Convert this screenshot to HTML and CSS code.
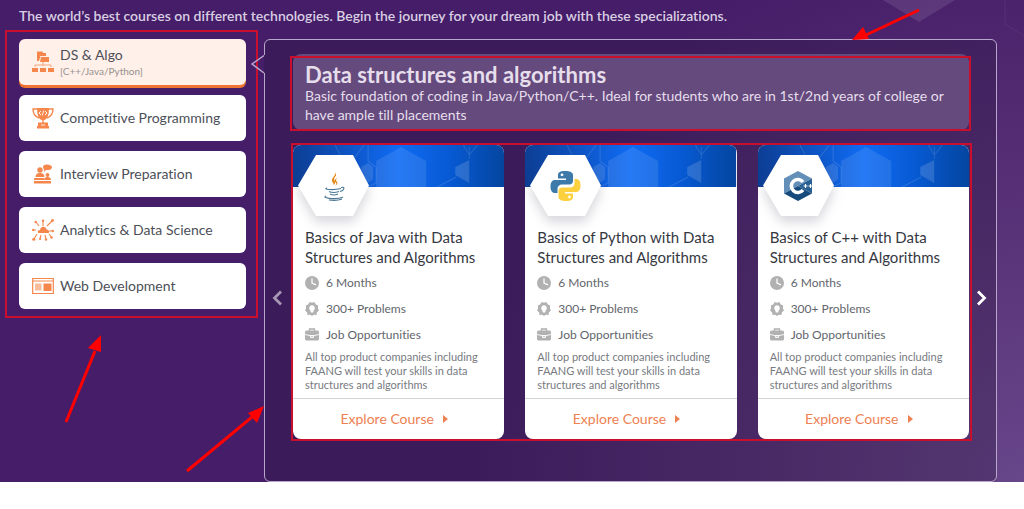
FILE: index.html
```html
<!DOCTYPE html>
<html lang="en">
<head>
<meta charset="utf-8">
<meta name="viewport" content="width=device-width, initial-scale=1">
<title>Courses</title>
<link rel="stylesheet" href="styles.css">
</head>
<body>
<svg class="sprite" width="0" height="0" aria-hidden="true">
  <defs>
    <linearGradient id="blue" x1="0" x2="1"><stop offset="0" stop-color="#0d3e94"/><stop offset=".5" stop-color="#0f6bf4"/><stop offset=".75" stop-color="#0759d2"/><stop offset="1" stop-color="#04459f"/></linearGradient>
    <symbol id="pattern" viewBox="0 0 211 42" preserveAspectRatio="none">
      <rect width="211" height="42" fill="url(#blue)"/>
      <path d="M83 42V16L108 2l25 14v26z" fill="#fff" opacity=".1"/>
      <path d="M162 22l14-7v23l-14-8z" fill="#fff" opacity=".15"/>
      <path d="M68 22l7-4 5 4v12l-5 4-7-4z" fill="#fff" opacity=".12"/>
      <path d="M75 0v16l8 6v16l-9 4M42 0l6 12h14l9-12M144 42l19-10M176 14V2M170 0l6 10 8-10" fill="none" stroke="#fff" opacity=".13"/>
    </symbol>
    <symbol id="clock" viewBox="0 0 14 14"><circle cx="7" cy="7" r="7" fill="#b1b1b1"/><path d="M7 2.5V7l4 1.8" fill="none" stroke="#fff" stroke-width="1.3"/></symbol>
    <symbol id="gear" viewBox="0 0 14 14"><path d="M4.600 0l2.400.8L9.400 0l1.400 2.400L13.200 3.600 12.900 6.200 14 8.400l-2 1.900-.6 2.600-2.700-.1L7 14l-1.700-1.200-2.700.1L2 10.300 0 8.400l1.100-2.200L.8 3.600l2.400-1.200z" fill="#b1b1b1"/><path d="M7 3.300a2.900 2.900 0 0 0-1.700 5.200L5.800 10.500h2.400l.5-2A2.900 2.900 0 0 0 7 3.300z" fill="#fff"/></symbol>
    <symbol id="bag" viewBox="0 0 14 14"><path d="M4.500 3V1h5v2" fill="none" stroke="#b1b1b1" stroke-width="1.400"/><rect y="2.500" width="14" height="10" rx="1.500" fill="#b1b1b1"/><path d="M0 6.500q7 3 14 0M5.500 7.500h3v2h-3z" fill="none" stroke="#fff" stroke-width=".9"/></symbol>
  </defs>
</svg>

<main class="courses">
  <p class="intro">The world’s best courses on different technologies. Begin the journey for your dream job with these specializations.</p>
  <svg class="decor" viewBox="0 0 150 40" aria-hidden="true">
    <path d="M9 0h72L45 22z" fill="#fff" opacity=".1"/>
    <path d="M131 0v24l19 12" fill="none" stroke="#fff" opacity=".06" stroke-width="1"/>
  </svg>

  <div class="layout">
    <nav class="tabs" aria-label="Specializations">
      <button class="tab tab-active" type="button">
        <svg class="tab-icon" viewBox="0 0 22 22" aria-hidden="true"><path d="M5 2V.5h5L11.500 2H14v3H8.500L7 10H5zM9 6h8v5H8z" fill="#f5874c"/><path d="M3 16v-2h16v2M11 11v4" fill="none" stroke="#f5a67c"/><path d="M0 17h6v4H0zM8 17h6v4H8zM16 17h6v4h-6z" fill="#f5874c"/></svg>
        <span class="tab-label">DS &amp; Algo<small class="tab-note">[C++/Java/Python]</small></span>
      </button>
      <button class="tab" type="button">
        <svg class="tab-icon" viewBox="0 0 22 22" aria-hidden="true"><path d="M5 1h12q0 10-4.500 12h-3Q5 11 5 1z" fill="#f5874c"/><path d="M5 2H1q0 7 6 9M17 2h4q0 7-6 9M11 12v4" fill="none" stroke="#f5874c" stroke-width="1.400"/><path d="M6 15.500h10V19h1v2.500H5V19h1z" fill="#f5874c"/><path d="M9 4L7 6l2 2M13 4l2 2-2 2M11.700 3.500l-1.400 5M9 18h4" fill="none" stroke="#fff" stroke-width=".9"/></svg>
        <span class="tab-label">Competitive Programming</span>
      </button>
      <button class="tab" type="button">
        <svg class="tab-icon" viewBox="0 0 22 22" aria-hidden="true"><circle cx="8" cy="7" r="2.700" fill="#f5874c"/><circle cx="15.500" cy="12" r="1.900" fill="#f5874c"/><path d="M3.500 14q0-4 4.500-4t4.500 4zM12 17q0-3 3.500-3t3.500 3zM2 15h10v2H2zM2 18h17v2.500H2zM11 4q0-2.500 4-2.500t5 2.500q0 3-4 3h-2l-2 2 .3-2.500Q11 5.500 11 4z" fill="#f5874c"/></svg>
        <span class="tab-label">Interview Preparation</span>
      </button>
      <button class="tab" type="button">
        <svg class="tab-icon" viewBox="0 0 22 22" aria-hidden="true"><path d="M6 14q-1-3 2-3 1-4 4.500-3 2 .5 2 2.500 3 0 2.500 3.500z" fill="#f5874c"/><path d="M11 7V2M15 7l5-5M7 7L4 3M4 11H1M17 12h4M5 15l-3 5M9 16l-1 4M13 16l1 4M17 15l3 4" stroke="#f5874c" stroke-width="1.100"/><g fill="#f5874c"><circle cx="11" cy="1.800" r="1.200"/><circle cx="20.500" cy="1.500" r="1.400"/><circle cx="3.700" cy="3" r="1.200"/><circle cx="1.200" cy="11" r="1.200"/><circle cx="20.800" cy="12" r="1.200"/><circle cx="1.800" cy="20.200" r="1.500"/><circle cx="8" cy="20" r="1.100"/><circle cx="14" cy="20.500" r="1.200"/><circle cx="19.500" cy="18.500" r="1.300"/></g></svg>
        <span class="tab-label">Analytics &amp; Data Science</span>
      </button>
      <button class="tab" type="button">
        <svg class="tab-icon" viewBox="0 0 22 22" aria-hidden="true"><path d="M.7 3.500h20.600v15H.7zM.7 6h20.600" fill="none" stroke="#f5874c" stroke-width="1.200"/><path d="M3 8.500h6.500v7H3z" fill="#f8bd9c"/><path d="M11.500 8.500h8v7.500h-8z" fill="#f5874c"/></svg>
        <span class="tab-label">Web Development</span>
      </button>
      <svg class="arrow arrow-tabs" viewBox="0 0 40 92" aria-hidden="true"><path d="M2 89L31 18" stroke="#f00" stroke-width="3"/><path d="M37 2L24 15l13 4z" fill="#f00"/></svg>
    </nav>

    <section class="panel">
      <svg class="notch" viewBox="0 0 15 22" aria-hidden="true"><path d="M14 2h1v18h-1z" fill="#3c1a5d"/><path d="M14 2.500L2 11l12 9" fill="none" stroke="#b9a6cb" stroke-width="1.500"/></svg>
      <svg class="arrow arrow-top" viewBox="0 0 70 34" aria-hidden="true"><path d="M67 2L14 27" stroke="#f00" stroke-width="3"/><path d="M0 32l11-13 6 12z" fill="#f00"/></svg>
      <svg class="arrow arrow-side" viewBox="0 0 80 70" aria-hidden="true"><path d="M2 67L67 13" stroke="#f00" stroke-width="3"/><path d="M79 2L63 9l9 10z" fill="#f00"/></svg>
      <button class="nav nav-prev" type="button" aria-label="Previous"><svg width="11" height="16" viewBox="0 0 11 16"><path d="M9 1.500L2.500 8 9 14.500" fill="none" stroke="currentColor" stroke-width="2.800"/></svg></button>
      <div class="content">
        <header class="banner">
          <h2 class="banner-title">Data structures and algorithms</h2>
          <p class="banner-text">Basic foundation of coding in Java/Python/C++. Ideal for students who are in 1st/2nd years of college or have ample till placements</p>
        </header>
        <div class="cards">
          <article class="card">
            <svg class="card-top" aria-hidden="true"><use href="#pattern"/></svg>
            <svg class="badge" viewBox="0 0 71 61" aria-hidden="true"><path d="M18 0h37l16 30.500L55 61H18L0 30.500z" fill="#fff"/>
              <path d="M37 17c2 4-6 6-2 11 1 1 1 2 0 3 5-4-1-6 2-9 2-2 1-3 0-5zM41 22c-5 2-5 4-3 6 1 1 0 2-1 3 5-3 1-4 1-6 0-1 1-2 3-3z" fill="#e58a1c"/><path d="M29 33q-3 1 2 1.500 7 .5 12-1M43 32.500q4-1 2.500 2-1 1.500-3.500 2M31 36.500q4 2 10 0M32 39q4 2 8 0M28 41q-3 1.500 3 2.300 8 1 14-1M31 45q8 1 13-1" fill="none" stroke="#4b7894" stroke-width="1.200"/></svg>
            <h3 class="card-title">Basics of Java with Data Structures and Algorithms</h3>
            <ul class="facts">
              <li><svg width="14" height="14"><use href="#clock"/></svg>6 Months</li>
              <li><svg width="14" height="14"><use href="#gear"/></svg>300+ Problems</li>
              <li><svg width="14" height="14"><use href="#bag"/></svg>Job Opportunities</li>
            </ul>
            <p class="card-text">All top product companies including FAANG will test your skills in data structures and algorithms</p>
            <a class="explore" href="#java">Explore Course<svg width="5" height="8" viewBox="0 0 5 8"><path d="M0 0l5 4-5 4z" fill="currentColor"/></svg></a>
          </article>
          <article class="card">
            <svg class="card-top" aria-hidden="true"><use href="#pattern"/></svg>
            <svg class="badge" viewBox="0 0 71 61" aria-hidden="true"><path d="M18 0h37l16 30.500L55 61H18L0 30.500z" fill="#fff"/>
              <path d="M35 16c-5 0-7 1.500-7 4v3.500h8V25H25c-3 0-4.500 2.500-4.500 6.500s1.500 6.500 4.500 6.500h2.500v-4c0-3 2-4.500 4.500-4.500h7.500c2 0 3.500-1.500 3.500-3.500v-6c0-2.500-3-4-8-4z" fill="#3d7aa9"/><path d="M36 46c5 0 7-1.500 7-4v-3.500h-8V37h11c3 0 4.500-2.500 4.500-6.500S49 24 46 24h-1.500v4c0 3-2 4.500-4.500 4.500h-8c-2 0-3.500 1.500-3.500 3.500v6c0 2.500 3 4 7.500 4z" fill="#fdd03e"/><circle cx="32" cy="19.800" r="1.400" fill="#fff"/><circle cx="39.500" cy="42" r="1.400" fill="#fff"/></svg>
            <h3 class="card-title">Basics of Python with Data Structures and Algorithms</h3>
            <ul class="facts">
              <li><svg width="14" height="14"><use href="#clock"/></svg>6 Months</li>
              <li><svg width="14" height="14"><use href="#gear"/></svg>300+ Problems</li>
              <li><svg width="14" height="14"><use href="#bag"/></svg>Job Opportunities</li>
            </ul>
            <p class="card-text">All top product companies including FAANG will test your skills in data structures and algorithms</p>
            <a class="explore" href="#python">Explore Course<svg width="5" height="8" viewBox="0 0 5 8"><path d="M0 0l5 4-5 4z" fill="currentColor"/></svg></a>
          </article>
          <article class="card">
            <svg class="card-top" aria-hidden="true"><use href="#pattern"/></svg>
            <svg class="badge" viewBox="0 0 71 61" aria-hidden="true"><path d="M18 0h37l16 30.500L55 61H18L0 30.500z" fill="#fff"/>
              <path d="M35 16l14 7.500L35 31l-14 7.500v-15z" fill="#648fb8"/><path d="M21 38.500L35 31l14 7.500L35 46z" fill="#174a7c"/><path d="M49 23.500v15L35 31z" fill="#285f93"/><path d="M40 27a6.500 6.500 0 1 0 0 8" fill="none" stroke="#fff" stroke-width="3.600"/><path d="M40.500 31h4M42.500 29v4M45.500 31h4M47.500 29v4" stroke="#fff" stroke-width="1.200"/></svg>
            <h3 class="card-title">Basics of C++ with Data Structures and Algorithms</h3>
            <ul class="facts">
              <li><svg width="14" height="14"><use href="#clock"/></svg>6 Months</li>
              <li><svg width="14" height="14"><use href="#gear"/></svg>300+ Problems</li>
              <li><svg width="14" height="14"><use href="#bag"/></svg>Job Opportunities</li>
            </ul>
            <p class="card-text">All top product companies including FAANG will test your skills in data structures and algorithms</p>
            <a class="explore" href="#cpp">Explore Course<svg width="5" height="8" viewBox="0 0 5 8"><path d="M0 0l5 4-5 4z" fill="currentColor"/></svg></a>
          </article>
        </div>
      </div>
      <button class="nav nav-next" type="button" aria-label="Next"><svg width="11" height="16" viewBox="0 0 11 16"><path d="M2 1.500L8.500 8 2 14.500" fill="none" stroke="currentColor" stroke-width="2.800"/></svg></button>
    </section>
  </div>
</main>
</body>
</html>
```
FILE: styles.css
```css
* { box-sizing: border-box; }
body { margin: 0; background: #fff; font-family: Lato, "Open Sans", sans-serif; font-variant-ligatures: none; color: #4c4f58; }
h2, h3, p, ul { margin: 0; padding: 0; }
button { font: inherit; color: inherit; border: 0; cursor: pointer; }
.sprite { position: absolute; }

.courses { position: relative; padding: 6px 27px 0 19px; background: radial-gradient(circle at 100% 100%, #68468a 0, #593378 22%, #451d68 50%, #451d68 100%); }
.intro { height: 33px; line-height: 20px; font-size: 14px; font-weight: 600; color: #d9cfe3; }
.decor { position: absolute; top: 0; right: 0; width: 150px; height: 40px; }

.layout { display: grid; grid-template-columns: 227px 1fr; column-gap: 18px; }
.tabs { position: relative; display: flex; flex-direction: column; gap: 10px; align-self: start; }
.tab { display: flex; align-items: center; gap: 6px; height: 46px; padding: 0 13px; border-radius: 6px; background: #fff; text-align: left; font-size: 14px; line-height: 18px; }
.tab-active { background: #fff0e9; box-shadow: 0 3px 0 #ed7433; }
.tab-icon { width: 22px; height: 22px; flex: none; }
.tab-note { display: block; font-size: 10px; line-height: 14px; color: #97908f; }

.tabs::after, .banner::after, .cards::after { content: ""; position: absolute; border: 2px solid #c8102e; pointer-events: none; }
.tabs::after { inset: -9px -12px -9px -14px; }
.banner::after { inset: 2px -2px -1px -3px; }
.cards::after { inset: -2px -3px -2px -2px; }
.arrow { position: absolute; z-index: 2; pointer-events: none; }
.arrow-tabs { left: 45px; top: 294px; width: 40px; height: 92px; }
.arrow-top { left: 587px; top: -32px; width: 70px; height: 34px; }
.arrow-side { left: -80px; top: 364px; width: 80px; height: 70px; }

.panel { position: relative; display: grid; grid-template-columns: 28px 1fr 27px; padding: 14px 0 42px; border: 1px solid #b9a6cb; border-radius: 6px; background: rgba(40, 24, 60, .3); }
.notch { position: absolute; left: -15px; top: 13px; width: 15px; height: 22px; }
.nav { display: flex; align-items: center; justify-content: center; padding: 102px 3px 0 0; background: none; color: #fff; }
.nav-prev { color: #a698b3; }
.content { min-width: 0; }
.banner { position: relative; padding: 10px 12px 6px; border-radius: 8px; background: #654a7e; color: #e6deeb; }
.banner-title { font-size: 22px; line-height: 22px; font-weight: 700; }
.banner-text { font-size: 14px; line-height: 19px; }

.cards { position: relative; display: grid; grid-template-columns: repeat(3, minmax(0, 1fr)); gap: 21px; margin-top: 15px; }
.card { position: relative; display: flex; flex-direction: column; overflow: hidden; border-radius: 8px; background: #fff; }
.card-top { display: block; width: 100%; height: 42px; }
.badge { position: absolute; left: 5px; top: 10px; width: 71px; height: 61px; filter: drop-shadow(0 6px 6px rgba(50, 50, 80, .2)); }
.card-title { margin: 40px 12px 3px; font-size: 15px; line-height: 20px; font-weight: 400; color: #36383f; }
.facts { list-style: none; padding: 0 12px; font-size: 12px; line-height: 26px; color: #62656c; }
.facts li { display: flex; align-items: center; gap: 7px; }
.card-text { margin: 2px 12px 6px; font-size: 11px; line-height: 14px; color: #777a80; }
.explore { display: flex; align-items: center; justify-content: center; gap: 9px; height: 41px; padding: 0 9px 1px 0; border-top: 1px solid #d2d4d6; font-size: 14px; color: #ee8152; text-decoration: none; }
```
